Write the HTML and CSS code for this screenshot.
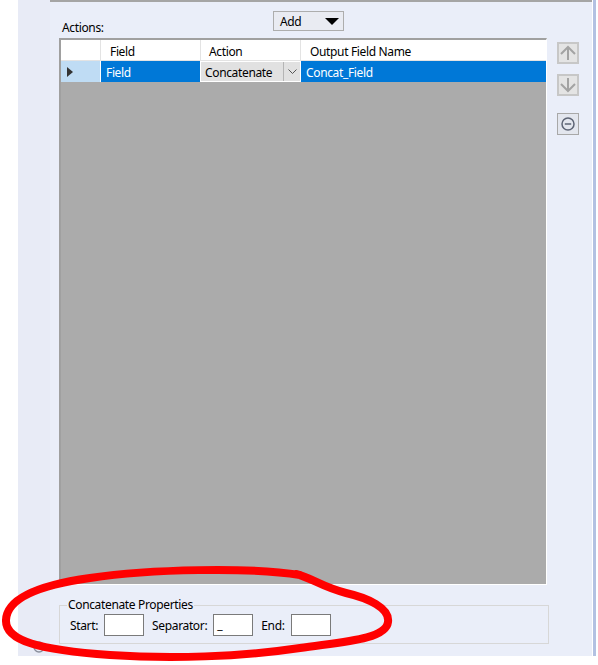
FILE: index.html
```html
<!DOCTYPE html>
<html>
<head>
<meta charset="utf-8">
<link rel="stylesheet" href="styles.css">
</head>
<body>
<div class="window">
  <div class="side">
    <svg class="help" width="14" height="14" viewBox="0 0 14 14"><circle cx="7" cy="7" r="5" fill="none" stroke="#8a8f9c" stroke-width="1.4"/></svg>
  </div>
  <div class="panel">
    <div class="toolbar">
      <span class="actions-label">Actions:</span>
      <div class="add-box">
        <span>Add</span>
        <svg width="14" height="7" viewBox="0 0 14 7"><path d="M0 0 H14 L7 7 Z" fill="#000"/></svg>
      </div>
    </div>
    <div class="main">
      <div class="grid">
        <div class="row head">
          <div class="cell rh"></div>
          <div class="cell c-field">Field</div>
          <div class="cell c-action">Action</div>
          <div class="cell c-out">Output Field Name</div>
        </div>
        <div class="row data">
          <div class="cell rh sel-rh"><svg width="7" height="10" viewBox="0 0 7 10"><path d="M0 0 L6 5 L0 10 Z" fill="#333"/></svg></div>
          <div class="cell c-field sel">Field</div>
          <div class="cell c-action combo">
            <span class="combo-text">Concatenate</span>
            <span class="combo-btn"><svg width="9" height="6" viewBox="0 0 9 6"><path d="M0.5 0.5 L4.5 4.5 L8.5 0.5" fill="none" stroke="#555" stroke-width="1"/></svg></span>
          </div>
          <div class="cell c-out sel">Concat_Field</div>
        </div>
      </div>
      <div class="tools">
        <div class="tbtn disabled">
          <svg width="18" height="18" viewBox="0 0 18 18"><path d="M9 16 V3 M2 10 L9 3 L16 10" fill="none" stroke="#a3a3a3" stroke-width="2"/></svg>
        </div>
        <div class="tbtn disabled">
          <svg width="18" height="18" viewBox="0 0 18 18"><path d="M9 2 V15 M2 8 L9 15 L16 8" fill="none" stroke="#a3a3a3" stroke-width="2"/></svg>
        </div>
        <div class="tbtn remove">
          <svg width="16" height="16" viewBox="0 0 16 16"><circle cx="8" cy="8" r="6" fill="none" stroke="#5d6475" stroke-width="1.5"/><path d="M4.8 8 H11.2" stroke="#5d6475" stroke-width="1.5"/></svg>
        </div>
      </div>
    </div>
    <fieldset class="props">
      <legend>Concatenate Properties</legend>
      <label>Start:</label><span class="inp"></span>
      <label class="l-next">Separator:</label><span class="inp">_</span>
      <label class="l-next">End:</label><span class="inp"></span>
    </fieldset>
  </div>
  <div class="edge"></div>
</div>
<svg class="markup" width="598" height="665" viewBox="0 0 598 665">
  <path d="M 300 575 C 250 567, 150 569, 90 578 C 40 585, 7 598, 6 620 C 5 641, 40 650, 110 655 C 170 659, 240 657, 300 648 C 340 642, 386 640, 388 622 C 390 608, 368 598, 346 593 C 322 587, 312 578, 296 574" fill="none" stroke="#ff0000" stroke-width="8" stroke-linecap="round" stroke-linejoin="round"/>
</svg>
</body>
</html>
```
FILE: styles.css
```css
html, body {
  margin: 0;
  padding: 0;
  background: #ffffff;
}

body {
  position: relative;
  width: 598px;
  height: 665px;
  overflow: hidden;
  font-family: "Noto Sans", "Segoe UI", sans-serif;
  font-size: 12px;
  letter-spacing: -0.35px;
  color: #000;
}

.window {
  display: flex;
  height: 656px;
  margin-left: 18px;
}

.side {
  width: 32px;
  background: #e8ebf6;
  display: flex;
  flex-direction: column;
  justify-content: flex-end;
}

.help {
  margin: 0 0 2px 14px;
}

.panel {
  width: 542px;
  background: #eaeef9;
  border-top: 2px solid #a5a5a5;
  padding-left: 9px;
  box-sizing: border-box;
}

.edge {
  width: 3px;
  margin-left: 1px;
  background: #b3c1e2;
}

/* label row above the grid */
.toolbar {
  display: flex;
  height: 36px;
}

.actions-label {
  width: 211px;
  padding-left: 3px;
  align-self: flex-end;
  margin-bottom: 2px;
  line-height: 16px;
}

.add-box {
  margin-top: 9px;
  width: 71px;
  height: 20px;
  box-sizing: border-box;
  border: 1px solid #adadad;
  background: #e9ebf2;
  display: flex;
  align-items: center;
  justify-content: space-between;
  padding: 0 4px 0 6px;
}

.add-box svg {
  margin-top: 1px;
}

/* grid + side buttons */
.main {
  display: flex;
}

.grid {
  width: 488px;
  height: 547px;
  box-sizing: border-box;
  border-top: 2px solid #a0a0a0;
  border-left: 2px solid #a0a0a0;
  border-right: 1px solid #ffffff;
  border-bottom: 1px solid #ffffff;
  background: #ababab;
}

.row {
  display: flex;
  height: 21px;
}

.cell {
  box-sizing: border-box;
  height: 21px;
  padding-top: 2px;
  line-height: 19px;
  white-space: nowrap;
  overflow: hidden;
}

.head .cell {
  background: #ffffff;
  border-right: 1px solid #e3e3e3;
  border-bottom: 1px solid #e3e3e3;
}

.head .c-field { padding-left: 9px; }
.head .c-action { padding-left: 8px; }
.head .c-out { padding-left: 9px; }

.rh { width: 40px; }
.c-field { width: 100px; }
.c-action { width: 100px; }
.c-out { width: 245px; }

.head .c-out { border-right: none; }

.sel-rh {
  background: #bfdcf4;
  border-right: 1px solid #ffffff;
  display: flex;
  align-items: center;
  padding: 0 0 0 6px;
}

.sel {
  background: #0078d7;
  color: #ffffff;
  padding-left: 5px;
}

.data .c-field {
  border-right: 1px solid #ffffff;
}

.combo {
  display: flex;
  background: #e1e1e1;
  border: 1px solid #ffffff;
  border-left: none;
  padding-top: 0;
}

.combo-text {
  flex: 1;
  padding-left: 4px;
  padding-top: 1px;
}

.combo-btn {
  width: 16px;
  border-left: 1px solid #b5b5b5;
  display: flex;
  align-items: center;
  justify-content: center;
}

.data .c-out {
  padding-left: 5px;
}

.tools {
  margin-left: 10px;
  padding-top: 4px;
  display: flex;
  flex-direction: column;
}

.tbtn {
  width: 22px;
  height: 22px;
  box-sizing: border-box;
  display: flex;
  align-items: center;
  justify-content: center;
}

.tbtn.disabled {
  border: 2px solid #c7c7c7;
  background: #e4e4e4;
  margin-bottom: 10px;
}

.tbtn.remove {
  margin-top: 7px;
  border: 1px solid #a8a8a8;
  background: #e3e6ee;
}

/* properties group */
.props {
  margin: 12px 0 0 0;
  width: 490px;
  box-sizing: border-box;
  border: 1px solid #d7d7d7;
  padding: 1px 0 7px 10px;
  display: flex;
  align-items: center;
}

.props legend {
  padding: 0 1px;
  margin-left: -3px;
  line-height: 16px;
}

.props label {
  margin-right: 6px;
}

.inp {
  width: 40px;
  height: 22px;
  box-sizing: border-box;
  border: 1px solid #7a7a7a;
  background: #ffffff;
  line-height: 20px;
  padding-left: 3px;
}

.l-next { margin-left: 8px; }

.markup {
  position: absolute;
  left: 0;
  top: 0;
  pointer-events: none;
}
```
